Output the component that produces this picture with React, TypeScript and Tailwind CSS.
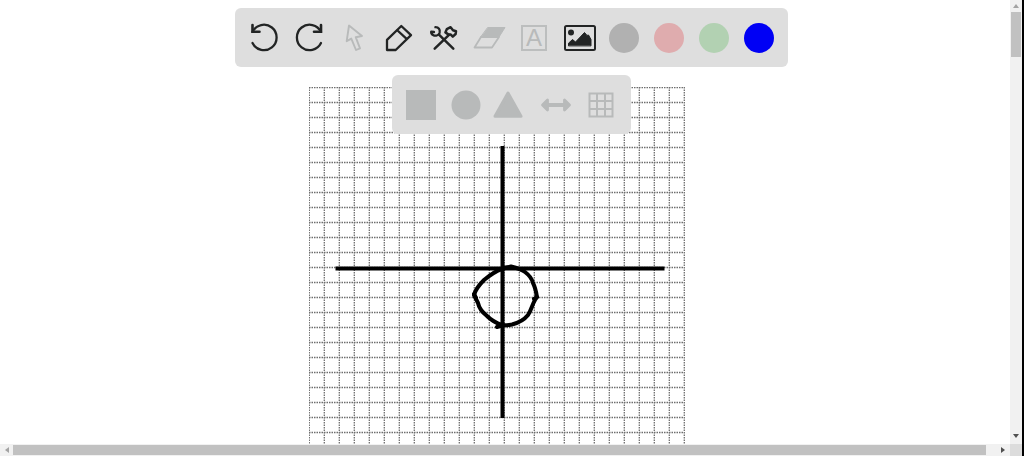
import React from 'react';
import clsx from 'clsx';

const CELL = 15;
const COLS = 25;
const ROWS = 30;

const DARK = '#222424';
const MUTED = '#b8baba';

const Icon = ({ children, color = DARK }: { children: React.ReactNode, color?: string }) => (
  <svg
    viewBox="-18 -18 36 36"
    className="w-9 h-9"
    fill="none"
    stroke={color}
    strokeWidth="2.3"
    strokeLinecap="round"
    strokeLinejoin="round"
    aria-hidden="true"
  >
    {children}
  </svg>
);

const ToolButton = ({ label, children }: { label: string, children: React.ReactNode }) => (
  <button type="button" aria-label={label} title={label} className="w-[45px] h-[59px] flex items-center justify-center">
    {children}
  </button>
);

const swatches = [
  { name: 'Black', className: 'bg-[#b1b1b1]' },
  { name: 'Red', className: 'bg-[#dfacae]' },
  { name: 'Green', className: 'bg-[#b2d1b2]' },
  { name: 'Blue', className: 'bg-[#0000f5]' },
];

const MainToolbar = () => (
  <div role="toolbar" aria-label="Drawing tools" className="flex pl-[7px] pr-[6px] rounded-md bg-[#dedede]">
    <ToolButton label="Undo">
      <Icon>
        <path d="M-11.5 -13V-6.2H-4.5" strokeWidth="2.6" strokeLinejoin="miter" />
        <path d="M-11.5 -6.2A12.7 12.7 0 1 1 -11.5 5" />
      </Icon>
    </ToolButton>
    <ToolButton label="Redo">
      <Icon>
        <path d="M12 -13V-6.2H5" strokeWidth="2.6" strokeLinejoin="miter" />
        <path d="M12 -6.2A12.7 12.7 0 1 0 12 5" />
      </Icon>
    </ToolButton>
    <ToolButton label="Select">
      <Icon color={MUTED}>
        <path d="M-5 -12.5L-7.3 3.2L-2.7 .6L2 12L6 10.3L1.7 -.8L8 -2Z" strokeWidth="1.9" />
      </Icon>
    </ToolButton>
    <ToolButton label="Pen">
      <Icon>
        <path d="M-12 12V1.8L2.3 -12L12 -2.8L-3.3 12ZM-2 -8L7.9 1.2" />
      </Icon>
    </ToolButton>
    <ToolButton label="Shapes">
      <Icon>
        <path d="M-8.6 -10.8C-5.4 -10.6 -3.6 -8.6 -4.4 -5.2C-5.4 -2.4 -8.6 -1.6 -11 -3C-12.4 -3.8 -13 -5 -12.8 -6.4L-10 -6" />
        <path d="M-4.8 -3.2L9.3 10.7M-9.3 10.7L5 -3.2" strokeWidth="2.5" />
        <path d="M1.4 -5.6L2.8 -8.8L6.6 -10.8L9 -7.8L12 -6.8L11.6 -4L8.8 -1.4L6.8 -3.4L4.6 -3.4Z" strokeWidth="2.5" />
      </Icon>
    </ToolButton>
    <ToolButton label="Eraser">
      <Icon color={MUTED}>
        <path d="M-1 -10.5H16L10 -1H-8Z" fill={MUTED} strokeWidth="1" />
        <path d="M-8 -1L-14.5 9.5H3L10 -1Z" strokeWidth="1.8" />
      </Icon>
    </ToolButton>
    <ToolButton label="Text">
      <span className="w-[26px] h-[26px] flex items-center justify-center border-2 border-[#bcbebe] text-[#b8baba] font-['Liberation_Sans',sans-serif] text-2xl leading-none">
        A
      </span>
    </ToolButton>
    <ToolButton label="Image">
      <Icon>
        <rect x="-14" y="-12" width="30" height="24" rx="1.5" strokeWidth="2" />
        <circle cx="-8" cy="-5.5" r="3" fill={DARK} stroke="none" />
        <path d="M-10.5 7.5V5.2L-6.5 1.5L-3.5 4L5.5 -5.5L8 -2.6L9.5 -3L12 1.5V7.5Z" fill={DARK} strokeWidth="1" />
      </Icon>
    </ToolButton>
    {swatches.map((swatch) => (
      <ToolButton key={swatch.name} label={swatch.name}>
        <span className={clsx('w-[30px] h-[30px] rounded-full', swatch.className)} />
      </ToolButton>
    ))}
  </div>
);

const ShapeToolbar = () => (
  <div role="toolbar" aria-label="Shapes" className="flex px-[7px] rounded-md bg-[#dedede]">
    <ToolButton label="Rectangle">
      <Icon color={MUTED}>
        <rect x="-15" y="-15" width="30" height="30" fill={MUTED} stroke="none" />
      </Icon>
    </ToolButton>
    <ToolButton label="Ellipse">
      <Icon color={MUTED}>
        <circle r="14.5" fill={MUTED} stroke="none" />
      </Icon>
    </ToolButton>
    <ToolButton label="Triangle">
      <Icon color={MUTED}>
        <path d="M-3 -12L10 11.3H-16Z" fill={MUTED} strokeWidth="3" />
      </Icon>
    </ToolButton>
    <ToolButton label="Arrow">
      <Icon color={MUTED}>
        <path d="M-11 0H11" strokeWidth="4" />
        <path d="M-13.5 0L-8.5 -5V5ZM13.5 0L8.5 -5V5Z" fill={MUTED} strokeWidth="2.8" />
      </Icon>
    </ToolButton>
    <ToolButton label="Grid">
      <Icon color={MUTED}>
        <path d="M-11.5 -11.5H11.5V11.5H-11.5ZM-4 -11.5V11.5M4 -11.5V11.5M-11.5 -4H11.5M-11.5 4H11.5" strokeWidth="2" strokeLinejoin="miter" />
      </Icon>
    </ToolButton>
  </div>
);

const Drawing = () => (
  <svg width="392" height="451" className="shrink-0" role="img" aria-label="Graph paper with two axes and a circle">
    <g stroke="#6e6e6e" strokeWidth="1.3" strokeDasharray="1.5 1">
      {Array.from({ length: COLS + 1 }, (_, i) => (
        <line key={`v${i}`} x1={i * CELL + 0.3} y1="0" x2={i * CELL + 0.3} y2={ROWS * CELL} />
      ))}
      {Array.from({ length: ROWS + 1 }, (_, i) => (
        <line key={`h${i}`} x1="0" y1={i * CELL + 0.5} x2={COLS * CELL} y2={i * CELL + 0.5} />
      ))}
    </g>
    <g stroke="#000" strokeWidth="4" fill="none" strokeLinejoin="round">
      <path d="M193.5 59V331M26.5 181.5H355.5" />
      <path
        d="M165 208C167 201 171 197 175 193C181 188 187 184 193 182L202 179.5C208 181 212 182 216 185C220 188 223 192 224 196C226 200 227 204 228 210L226 213C223 218 222 224 219 228C215 233 209 236 203 237.5C199 238 196 239 193 238C187 236 182 233 178 229C173 225 170 221 169 216Z"
        strokeLinecap="round"
      />
      <path d="M188 240L194 238M196 180.5L203 180M165 207L167 211M228 210L225 212" strokeLinecap="round" />
    </g>
  </svg>
);

export default function App() {
  return (
    <div className="relative h-screen flex flex-col overflow-hidden bg-white">
      <div className="flex flex-1 min-h-0">
        <main className="flex-1 min-w-0 overflow-hidden flex justify-center items-start pt-[87px]">
          <Drawing />
        </main>
        <div className="w-3 flex flex-col bg-[#f1f1f1]">
          <button type="button" aria-label="Scroll up" className="h-3 flex items-center justify-center">
            <svg viewBox="0 0 6 4" className="w-[6px] h-1" fill="#a3a3a3"><path d="M0 4L3 0L6 4Z" /></svg>
          </button>
          <div className="flex-1 px-px">
            <div className="h-[10%] min-h-[45px] bg-[#c1c1c1]" />
          </div>
          <button type="button" aria-label="Scroll down" className="h-4 flex items-center justify-center">
            <svg viewBox="0 0 6 4" className="w-[6px] h-1" fill="#505050"><path d="M0 0L3 4L6 0Z" /></svg>
          </button>
        </div>
        <div className="w-0.5 bg-black" />
      </div>
      <div className="flex">
        <div className="flex-1 h-3 flex bg-[#f1f1f1]">
          <button type="button" aria-label="Scroll left" className="w-[13px] flex items-center justify-center">
            <svg viewBox="0 0 4 6" className="w-1 h-[6px]" fill="#a3a3a3"><path d="M4 0L0 3L4 6Z" /></svg>
          </button>
          <div className="flex-1 py-px">
            <div className="h-full w-[99%] bg-[#c1c1c1]" />
          </div>
          <button type="button" aria-label="Scroll right" className="w-[14px] flex items-center justify-center">
            <svg viewBox="0 0 4 6" className="w-1 h-[6px]" fill="#505050"><path d="M0 0L4 3L0 6Z" /></svg>
          </button>
        </div>
        <div className="w-3 bg-[#dcdcdc]" />
        <div className="w-0.5 bg-black" />
      </div>
      <header className="absolute inset-x-0 top-0 pt-2 pr-0.5 flex flex-col items-center gap-2 pointer-events-none">
        <div className="pointer-events-auto"><MainToolbar /></div>
        <div className="pointer-events-auto"><ShapeToolbar /></div>
      </header>
    </div>
  );
}
